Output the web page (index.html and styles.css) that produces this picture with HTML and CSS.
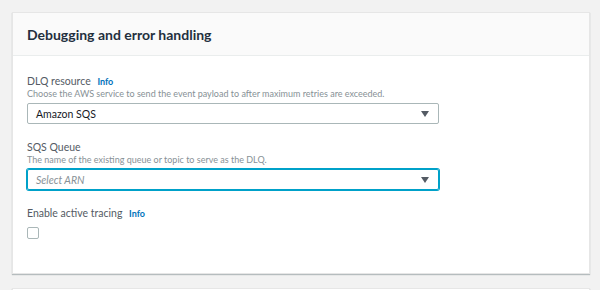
FILE: index.html
```html
<!DOCTYPE html>
<html>
<head>
<meta charset="utf-8">
<link rel="stylesheet" href="styles.css">
</head>
<body>
<div class="card">
  <div class="card-header">
    <h2 class="title">Debugging and error handling</h2>
  </div>
  <div class="card-body">
    <div class="field">
      <div class="label">DLQ resource <span class="info">Info</span></div>
      <div class="desc">Choose the AWS service to send the event payload to after maximum retries are exceeded.</div>
      <div class="select">
        <span class="value">Amazon SQS</span>
        <span class="arrow"></span>
      </div>
    </div>
    <div class="field">
      <div class="label">SQS Queue</div>
      <div class="desc">The name of the existing queue or topic to serve as the DLQ.</div>
      <div class="select focused">
        <span class="value placeholder">Select ARN</span>
        <span class="arrow"></span>
      </div>
    </div>
    <div class="field last">
      <div class="label">Enable active tracing <span class="info">Info</span></div>
      <div class="checkbox"></div>
    </div>
  </div>
</div>
<div class="card next"></div>
</body>
</html>
```

FILE: styles.css
```css
html, body {
  margin: 0;
  padding: 0;
  background: #f2f2f2;
  font-family: Lato, "Open Sans", sans-serif;
  color: #16191f;
  overflow: hidden;
}
body {
  padding: 12px 10px 0 12px;
}
.card {
  width: 578px;
  background: #fff;
  border: 1px solid #e6e6e6;
  box-shadow: 0 1px 1px rgba(0,28,36,0.25);
  box-sizing: border-box;
}
.card-header {
  height: 43px;
  background: #fafafa;
  border-bottom: 1px solid #eaeded;
  display: flex;
  align-items: center;
  padding-left: 14px;
  box-sizing: border-box;
}
.title {
  margin: 0;
  font-size: 14px;
  font-weight: 700;
  color: #232f3e;
}
.card-body {
  padding: 19px 14px 34px 14px;
}
.field {
  margin-bottom: 17px;
}
.field.last {
  margin-bottom: 0;
}
.label {
  font-size: 10.5px;
  color: #545b64;
  line-height: 13px;
  height: 13px;
}
.info {
  color: #0073bb;
  font-size: 9px;
  font-weight: 700;
  margin-left: 4px;
}
.desc {
  font-size: 9px;
  color: #879196;
  line-height: 11px;
  height: 11px;
}
.select {
  width: 412px;
  height: 21px;
  box-sizing: border-box;
  border: 1px solid #aab7b8;
  border-radius: 2px;
  margin-top: 4px;
  display: flex;
  align-items: center;
  justify-content: space-between;
  padding: 0 8px;
}
.select.focused {
  border: 1px solid #00a1c9;
  box-shadow: 0 0 0 1px #00a1c9;
}
.value {
  font-size: 10.5px;
  color: #16191f;
}
.placeholder {
  font-style: italic;
  color: #879196;
}
.arrow {
  width: 0;
  height: 0;
  border-left: 4.5px solid transparent;
  border-right: 4.5px solid transparent;
  border-top: 6px solid #545b64;
  margin-right: 1px;
}
.checkbox {
  width: 10px;
  height: 10px;
  border: 1px solid #aab7b8;
  border-radius: 2px;
  margin-top: 7px;
  background: #fff;
}
.card.next {
  margin-top: 14px;
  height: 20px;
}
```
